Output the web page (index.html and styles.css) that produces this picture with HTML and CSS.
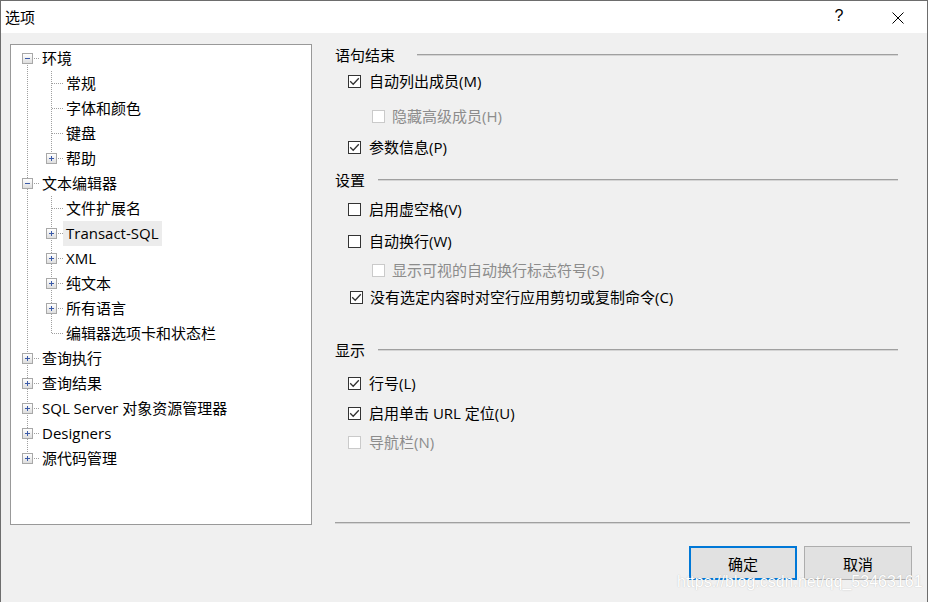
FILE: index.html
```html
<!DOCTYPE html>
<html lang="zh-CN">
<head>
<meta charset="utf-8">
<title>选项</title>
<link rel="stylesheet" href="styles.css">
</head>
<body>
<div class="window">
  <div class="titlebar">
    <span class="title">选项</span>
    <div class="caption-buttons">
      <span class="caption-btn help">?</span>
      <span class="caption-btn close">
        <svg width="12" height="12" viewBox="0 0 12 12"><path d="M0.5 0.5 L11.5 11.5 M11.5 0.5 L0.5 11.5" stroke="#000" stroke-width="1" fill="none"/></svg>
      </span>
    </div>
  </div>

  <div class="content">
    <div class="tree">
      <ul class="tree-root">
        <li>
          <div class="row"><span class="twisty"><span class="exp"></span></span><span class="label">环境</span></div>
          <ul class="children">
            <li><div class="row"><span class="twisty"></span><span class="label">常规</span></div></li>
            <li><div class="row"><span class="twisty"></span><span class="label">字体和颜色</span></div></li>
            <li><div class="row"><span class="twisty"></span><span class="label">键盘</span></div></li>
            <li><div class="row"><span class="twisty"><span class="exp plus"></span></span><span class="label">帮助</span></div></li>
          </ul>
        </li>
        <li>
          <div class="row"><span class="twisty"><span class="exp"></span></span><span class="label">文本编辑器</span></div>
          <ul class="children">
            <li><div class="row"><span class="twisty"></span><span class="label">文件扩展名</span></div></li>
            <li><div class="row"><span class="twisty"><span class="exp plus"></span></span><span class="label selected">Transact-SQL</span></div></li>
            <li><div class="row"><span class="twisty"><span class="exp plus"></span></span><span class="label">XML</span></div></li>
            <li><div class="row"><span class="twisty"><span class="exp plus"></span></span><span class="label">纯文本</span></div></li>
            <li><div class="row"><span class="twisty"><span class="exp plus"></span></span><span class="label">所有语言</span></div></li>
            <li><div class="row"><span class="twisty"></span><span class="label">编辑器选项卡和状态栏</span></div></li>
          </ul>
        </li>
        <li><div class="row"><span class="twisty"><span class="exp plus"></span></span><span class="label">查询执行</span></div></li>
        <li><div class="row"><span class="twisty"><span class="exp plus"></span></span><span class="label">查询结果</span></div></li>
        <li><div class="row"><span class="twisty"><span class="exp plus"></span></span><span class="label">SQL Server 对象资源管理器</span></div></li>
        <li><div class="row"><span class="twisty"><span class="exp plus"></span></span><span class="label">Designers</span></div></li>
        <li><div class="row"><span class="twisty"><span class="exp plus"></span></span><span class="label">源代码管理</span></div></li>
      </ul>
    </div>

    <div class="options">
      <div class="groups">
        <div class="group-head first mt1"><span>语句结束</span><span class="rule"></span></div>
        <label class="opt mt6"><span class="cb"><svg width="11" height="11" viewBox="0 0 11 11"><path d="M1.2 5.3 L4.2 8.3 L9.8 2.2" stroke="#333" stroke-width="1.3" fill="none"/></svg></span><span>自动列出成员(M)</span></label>
        <label class="opt sub disabled mt15"><span class="cb"></span><span>隐藏高级成员(H)</span></label>
        <label class="opt mt11"><span class="cb"><svg width="11" height="11" viewBox="0 0 11 11"><path d="M1.2 5.3 L4.2 8.3 L9.8 2.2" stroke="#333" stroke-width="1.3" fill="none"/></svg></span><span>参数信息(P)</span></label>

        <div class="group-head mt13"><span>设置</span><span class="rule"></span></div>
        <label class="opt mt9"><span class="cb"></span><span>启用虚空格(V)</span></label>
        <label class="opt mt12"><span class="cb"></span><span>自动换行(W)</span></label>
        <label class="opt sub disabled mt9"><span class="cb"></span><span>显示可视的自动换行标志符号(S)</span></label>
        <label class="opt shift mt7"><span class="cb"><svg width="11" height="11" viewBox="0 0 11 11"><path d="M1.2 5.3 L4.2 8.3 L9.8 2.2" stroke="#333" stroke-width="1.3" fill="none"/></svg></span><span>没有选定内容时对空行应用剪切或复制命令(C)</span></label>

        <div class="group-head mt33"><span>显示</span><span class="rule"></span></div>
        <label class="opt mt13"><span class="cb"><svg width="11" height="11" viewBox="0 0 11 11"><path d="M1.2 5.3 L4.2 8.3 L9.8 2.2" stroke="#333" stroke-width="1.3" fill="none"/></svg></span><span>行号(L)</span></label>
        <label class="opt mt10"><span class="cb"><svg width="11" height="11" viewBox="0 0 11 11"><path d="M1.2 5.3 L4.2 8.3 L9.8 2.2" stroke="#333" stroke-width="1.3" fill="none"/></svg></span><span>启用单击 URL 定位(U)</span></label>
        <label class="opt disabled mt9"><span class="cb"></span><span>导航栏(N)</span></label>
      </div>
      <div class="separator"></div>
    </div>
  </div>

  <div class="footer">
    <button class="btn default">确定</button>
    <button class="btn">取消</button>
  </div>

  <div class="watermark">https://blog.csdn.net/qq_53463161</div>
</div>
</body>
</html>
```

FILE: styles.css
```css
* { box-sizing: border-box; }
html, body { margin: 0; padding: 0; }
body {
  width: 928px;
  height: 602px;
  overflow: hidden;
  background: #f0f0f0;
  font-family: "Open Sans", "Noto Sans CJK SC", sans-serif;
  font-size: 15px;
  color: #000;
}

.window {
  position: relative;
  width: 928px;
  height: 602px;
  border: 1px solid #6d6d6d;
  border-bottom: none;
  background: #f0f0f0;
}

/* title bar */
.titlebar {
  height: 32px;
  background: #fff;
  display: flex;
  align-items: center;
  justify-content: space-between;
}
.title { padding-left: 4px; line-height: 32px; }
.caption-buttons { display: flex; }
.caption-btn {
  width: 58px;
  height: 32px;
  display: flex;
  align-items: center;
  justify-content: center;
}
.help { font-family: "Liberation Sans", sans-serif; font-size: 16px; padding-bottom: 2px; padding-right: 2px; }
.close svg { display: block; margin-top: 2px; }

/* content */
.content {
  display: grid;
  grid-template-columns: 302px 1fr;
  column-gap: 23px;
  height: 492px;
  padding: 11px 17px 0 9px;
}

/* tree */
.tree {
  background: #fff;
  border: 1px solid #999;
  padding-top: 1px;
  overflow: hidden;
}
.tree ul { list-style: none; margin: 0; padding: 0; position: relative; }
.tree ul::before {
  content: "";
  position: absolute;
  border-left: 1px dotted #a0a0a0;
  top: 0;
  bottom: 13px;
  left: 40px;
}
.tree .tree-root::before { top: 13px; left: 16px; }
.row {
  display: flex;
  align-items: center;
  height: 25px;
  padding-left: 5px;
}
.children .row { padding-left: 29px; }
.twisty {
  position: relative;
  width: 23px;
  height: 25px;
  flex: none;
}
.twisty::after {
  content: "";
  position: absolute;
  left: 12px;
  right: 0;
  top: 12px;
  border-top: 1px dotted #a0a0a0;
}
.exp {
  position: absolute;
  left: 6px;
  top: 7px;
  width: 11px;
  height: 11px;
  z-index: 1;
  border: 1px solid #a8a8a8;
  background: linear-gradient(#ffffff, #dedede);
}
.exp::before {
  content: "";
  position: absolute;
  left: 2px;
  top: 4px;
  width: 5px;
  height: 1px;
  background: #3b5aa8;
}
.exp.plus::after {
  content: "";
  position: absolute;
  left: 4px;
  top: 2px;
  width: 1px;
  height: 5px;
  background: #3b5aa8;
}
.label {
  line-height: 25px;
  padding: 0 3px;
  white-space: nowrap;
}
.label.selected { background: #ececec; }

/* options */
.options {
  display: flex;
  flex-direction: column;
}
.groups { padding-right: 12px; }
.group-head {
  display: flex;
  align-items: center;
  height: 20px;
  line-height: 20px;
}
.group-head .rule {
  flex: 1;
  margin-left: 13px;
  border-top: 1px solid #a0a0a0;
  border-bottom: 1px solid #d4d4d4;
}
.group-head.first .rule { margin-left: 22px; }

.opt {
  display: flex;
  align-items: center;
  height: 20px;
  line-height: 20px;
  padding-left: 13px;
  gap: 8px;
  white-space: nowrap;
}
.opt.sub { padding-left: 37px; gap: 7px; }
.opt.shift { padding-left: 15px; gap: 7px; }
.opt.disabled { color: #8c8c8c; }
.cb {
  width: 13px;
  height: 13px;
  flex: none;
  border: 1px solid #333;
  background: #fff;
  display: flex;
  align-items: center;
  justify-content: center;
}
.cb svg { display: block; }
.opt.disabled .cb { border-color: #cacaca; }

.mt1 { margin-top: 1px; }
.mt6 { margin-top: 6px; }
.mt7 { margin-top: 7px; }
.mt9 { margin-top: 9px; }
.mt10 { margin-top: 10px; }
.mt11 { margin-top: 11px; }
.mt12 { margin-top: 12px; }
.mt13 { margin-top: 13px; }
.mt15 { margin-top: 15px; }
.mt33 { margin-top: 33px; }

.separator {
  margin-top: auto;
  margin-bottom: 1px;
  border-top: 1px solid #a0a0a0;
  border-bottom: 1px solid #d4d4d4;
}

/* footer */
.footer {
  display: flex;
  justify-content: flex-end;
  gap: 7px;
  padding: 21px 15px 0 0;
}
.btn {
  width: 108px;
  height: 34px;
  padding: 0;
  background: #e1e1e1;
  border: 1px solid #adadad;
  font-family: "Open Sans", "Noto Sans CJK SC", sans-serif;
  font-size: 15px;
  color: #000;
}
.btn.default { border: 2px solid #0078d7; }

.watermark {
  position: absolute;
  left: 676px;
  top: 572px;
  font-family: "Liberation Sans", sans-serif;
  font-size: 16px;
  color: #ffffff;
  text-shadow: 0 0 1px rgba(120, 120, 120, 0.5);
  white-space: nowrap;
}
```
